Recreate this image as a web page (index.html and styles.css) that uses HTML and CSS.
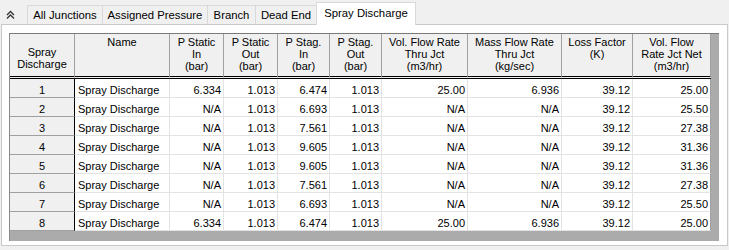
FILE: index.html
```html
<!DOCTYPE html>
<html lang="en">
<head>
  <meta charset="UTF-8" />
  <title>Spray Discharge</title>
  <link rel="stylesheet" href="styles.css">
</head>
<body>

  <div class="tabs">
    <span class="collapse">
      <svg width="27" height="24" viewBox="0 0 27 24">
        <polyline points="7,15 10.5,11.5 14,15" fill="none" stroke="#333" stroke-width="1.3"/>
        <polyline points="7,18.5 10.5,15 14,18.5" fill="none" stroke="#333" stroke-width="1.3"/>
      </svg>
    </span>
    <div class="tab">All Junctions</div>
    <div class="tab">Assigned Pressure</div>
    <div class="tab">Branch</div>
    <div class="tab">Dead End</div>
    <div class="tab active">Spray Discharge</div>
  </div>

  <div class="panel">
    <div class="grid">
      <table class="results">
        <colgroup>
          <col class="c-num"><col class="c-name"><col class="c-p"><col class="c-p">
          <col class="c-s"><col class="c-s"><col class="c-vol"><col class="c-mass">
          <col class="c-loss"><col class="c-net">
        </colgroup>
        <thead>
          <tr>
            <th class="corner">Spray<br>Discharge</th>
            <th>Name</th>
            <th>P Static<br>In<br>(bar)</th>
            <th>P Static<br>Out<br>(bar)</th>
            <th>P Stag.<br>In<br>(bar)</th>
            <th>P Stag.<br>Out<br>(bar)</th>
            <th>Vol. Flow Rate<br>Thru Jct<br>(m3/hr)</th>
            <th>Mass Flow Rate<br>Thru Jct<br>(kg/sec)</th>
            <th>Loss Factor<br>(K)</th>
            <th class="last">Vol. Flow<br>Rate Jct Net<br>(m3/hr)</th>
          </tr>
        </thead>
        <tbody id="rows"></tbody>
      </table>
    </div>
  </div>

  <script>
    // spray discharge junction results
    const rows = [
      ["1", "6.334", "1.013", "6.474", "1.013", "25.00", "6.936", "39.12", "25.00"],
      ["2", "N/A", "1.013", "6.693", "1.013", "N/A", "N/A", "39.12", "25.50"],
      ["3", "N/A", "1.013", "7.561", "1.013", "N/A", "N/A", "39.12", "27.38"],
      ["4", "N/A", "1.013", "9.605", "1.013", "N/A", "N/A", "39.12", "31.36"],
      ["5", "N/A", "1.013", "9.605", "1.013", "N/A", "N/A", "39.12", "31.36"],
      ["6", "N/A", "1.013", "7.561", "1.013", "N/A", "N/A", "39.12", "27.38"],
      ["7", "N/A", "1.013", "6.693", "1.013", "N/A", "N/A", "39.12", "25.50"],
      ["8", "6.334", "1.013", "6.474", "1.013", "25.00", "6.936", "39.12", "25.00"]
    ];

    const body = document.getElementById("rows");
    rows.forEach(r => {
      const vals = r.slice(1).map((v, i) =>
        `<td class="val${i === 7 ? ' last' : ''}">${v}</td>`).join("");
      body.insertAdjacentHTML("beforeend",
        `<tr><td class="num">${r[0]}</td><td class="name">Spray Discharge</td>${vals}</tr>`);
    });
  </script>

</body>
</html>
```

FILE: styles.css
```css
body {
  margin: 0;
  background-color: #f0f0f0;
  font-family: 'Liberation Sans', Arial, sans-serif;
  font-size: 11px;
  color: #000;
}
.tabs {
  display: grid;
  grid-template-columns: 27px 76px 105px 48px 61px 99px;
  align-items: end;
  height: 25px;
  margin-bottom: -1px;
  position: relative;
  z-index: 1;
}
.collapse {
  align-self: start;
  height: 24px;
}
.collapse svg {
  display: block;
}
.tab {
  box-sizing: border-box;
  height: 19px;
  margin-bottom: 1px;
  display: flex;
  align-items: center;
  justify-content: center;
  font-size: 11.3px;
  white-space: nowrap;
  border-top: 1px solid #d9d9d9;
  border-right: 1px solid #d9d9d9;
}
.tab:nth-child(2) {
  border-left: 1px solid #d9d9d9;
}
.tab.active {
  height: 23px;
  margin-bottom: 0;
  margin-left: -1px;
  padding-bottom: 2px;
  background-color: #fff;
  border-left: 1px solid #d9d9d9;
}
.panel {
  margin: 0 1px;
  padding: 8px 8px 5px 7px;
  background-color: #fff;
  border: 1px solid #c9c9c9;
  height: 222px;
  box-sizing: border-box;
}
.grid {
  box-sizing: border-box;
  width: 710px;
  height: 208px;
  background-color: #ababab;
  border-top: 1px solid #7a7a7a;
  border-left: 1px solid #8a8a8a;
}
.results {
  table-layout: fixed;
  width: 701px;
  border-collapse: separate;
  border-spacing: 0;
  background-color: #fff;
}
.c-num { width: 65px; }
.c-name { width: 95px; }
.c-p { width: 54px; }
.c-s { width: 52px; }
.c-vol { width: 86px; }
.c-mass { width: 94px; }
.c-loss { width: 71px; }
.c-net { width: 78px; }

.results th {
  box-sizing: border-box;
  height: 45px;
  padding: 2px 1px 0;
  line-height: 12px;
  font-weight: normal;
  text-align: center;
  vertical-align: top;
  background-color: #f0f0f0;
  border-right: 1px solid #a0a0a0;
  border-bottom: 3px double #000;
  white-space: nowrap;
}
.results th.corner {
  vertical-align: middle;
  padding-top: 6px;
}
.results td {
  box-sizing: border-box;
  height: 19px;
  padding: 5px 2px 0;
  line-height: 13px;
  white-space: nowrap;
  vertical-align: top;
  border-right: 1px solid #e3e3e3;
  border-bottom: 1px solid #e3e3e3;
}
.results td.num {
  text-align: center;
  background-color: #f0f0f0;
  border-right: 1px solid #000;
  border-bottom: 1px solid #a0a0a0;
}
.results td.name {
  text-align: left;
  padding-left: 3px;
}
.results td.val {
  text-align: right;
}
.results .last {
  border-right: 1px solid #a0a0a0;
}
```
